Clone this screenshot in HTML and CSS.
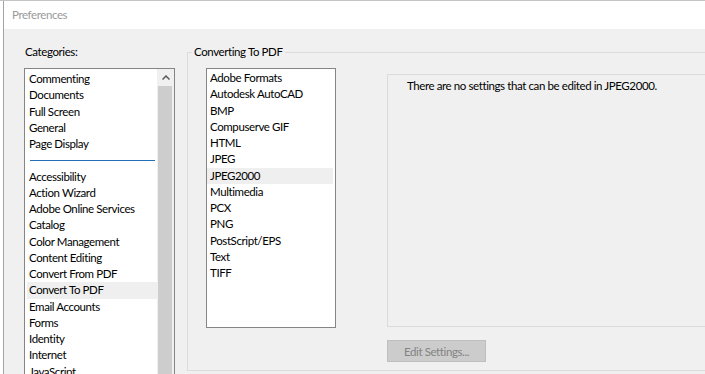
FILE: index.html
```html
<!DOCTYPE html>
<html>
<head>
<meta charset="utf-8">
<title>Preferences</title>
<link rel="stylesheet" href="styles.css">
</head>
<body>
<div class="screen">
  <div class="window">
    <div class="titlebar">Preferences</div>
    <div class="content">
      <div class="left-col">
        <div class="label">Categories:</div>
        <div class="listbox categories">
          <ul class="items">
            <li>Commenting</li>
            <li>Documents</li>
            <li>Full Screen</li>
            <li>General</li>
            <li>Page Display</li>
            <li class="sep"><span></span></li>
            <li>Accessibility</li>
            <li>Action Wizard</li>
            <li>Adobe Online Services</li>
            <li>Catalog</li>
            <li>Color Management</li>
            <li>Content Editing</li>
            <li>Convert From PDF</li>
            <li class="selected">Convert To PDF</li>
            <li>Email Accounts</li>
            <li>Forms</li>
            <li>Identity</li>
            <li>Internet</li>
            <li>JavaScript</li>
          </ul>
          <div class="scrollbar">
            <div class="sb-up">
              <svg width="8" height="5" viewBox="0 0 8 5"><polyline points="0.5,4.5 4,1 7.5,4.5" fill="none" stroke="#5a5a5a" stroke-width="1.5"/></svg>
            </div>
            <div class="sb-thumb"></div>
          </div>
        </div>
      </div>
      <fieldset class="group">
        <legend>Converting To PDF</legend>
        <div class="listbox formats">
          <ul class="items">
            <li>Adobe Formats</li>
            <li>Autodesk AutoCAD</li>
            <li>BMP</li>
            <li>Compuserve GIF</li>
            <li>HTML</li>
            <li>JPEG</li>
            <li class="selected">JPEG2000</li>
            <li>Multimedia</li>
            <li>PCX</li>
            <li>PNG</li>
            <li>PostScript/EPS</li>
            <li>Text</li>
            <li>TIFF</li>
          </ul>
        </div>
        <div class="settings-col">
          <div class="settings-panel">There are no settings that can be edited in JPEG2000.</div>
          <button class="btn" disabled>Edit Settings...</button>
        </div>
      </fieldset>
    </div>
  </div>
</div>
</body>
</html>
```
FILE: styles.css
```css
html, body {
  margin: 0;
  padding: 0;
  background: #ffffff;
  overflow: hidden;
}
body {
  font-family: Lato, "Liberation Sans", sans-serif;
  font-size: 11.5px;
  letter-spacing: -0.4px;
  color: #000;
}
.screen {
  width: 705px;
  height: 374px;
  border-top: 1px solid #c4c4c4;
  box-sizing: border-box;
  overflow: hidden;
}
.window {
  margin-left: 3px;
  width: 760px;
  height: 400px;
  border-left: 1px solid #a3a3a3;
  background: #f0f0f0;
}
.titlebar {
  height: 28px;
  line-height: 28px;
  padding-left: 8px;
  background: #ffffff;
  color: #9a9a9a;
}
.content {
  display: flex;
  align-items: flex-start;
  padding: 14px 0 0 20px;
}
.left-col {
  display: flex;
  flex-direction: column;
  width: 151px;
}
.label {
  line-height: 16px;
  padding: 1px 0 0 1px;
  margin-bottom: 8px;
}
.listbox {
  background: #ffffff;
  border: 1px solid #858585;
  box-sizing: border-box;
}
.items {
  list-style: none;
  margin: 0;
  padding: 0;
}
.items li {
  line-height: 16.25px;
  height: 16.25px;
  white-space: nowrap;
}
.categories {
  height: 320px;
  display: flex;
}
.categories .items {
  flex: 1;
  padding-top: 2px;
}
.categories .items li {
  margin-left: 2px;
  padding-left: 2px;
}
.items li.selected {
  background: #efefef;
}
.items li.sep {
  display: flex;
  align-items: center;
  padding: 0;
  margin: 0 2px 0 5px;
}
.items li.sep span {
  display: block;
  flex: 1;
  height: 1px;
  background: #2370b6;
}
.scrollbar {
  width: 17px;
  background: #f0f0f0;
  display: flex;
  flex-direction: column;
}
.sb-up {
  height: 17px;
  display: flex;
  align-items: center;
  justify-content: center;
}
.sb-thumb {
  flex: 1;
  margin: 0 2px 0 1px;
  background: #cdcdcd;
}
.group {
  margin: 1px 0 0 12px;
  padding: 8px 0 0 0;
  border: 1px solid #dcdcdc;
  width: 560px;
  height: 327px;
  box-sizing: border-box;
  display: flex;
  align-items: flex-start;
  min-width: 0;
}
.group legend {
  margin-left: 4px;
  padding: 0 2px;
  line-height: 16px;
}
.formats {
  margin-left: 18px;
  width: 130px;
  height: 260px;
  flex: none;
}
.formats .items {
  padding-top: 1px;
}
.formats .items li {
  padding-left: 3px;
  margin-right: 2px;
}
.settings-col {
  margin: 6px 0 0 51px;
  flex: 1;
  display: flex;
  flex-direction: column;
  align-items: flex-start;
}
.settings-panel {
  align-self: stretch;
  height: 253px;
  box-sizing: border-box;
  border: 1px solid #dadada;
  border-right: none;
  padding: 3px 0 0 19px;
  line-height: 16px;
}
.btn {
  margin-top: 13px;
  width: 99px;
  height: 22px;
  background: #cccccc;
  border: 1px solid #bfbfbf;
  color: #838383;
  font-family: inherit;
  font-size: inherit;
  letter-spacing: inherit;
  padding: 0;
}
```
